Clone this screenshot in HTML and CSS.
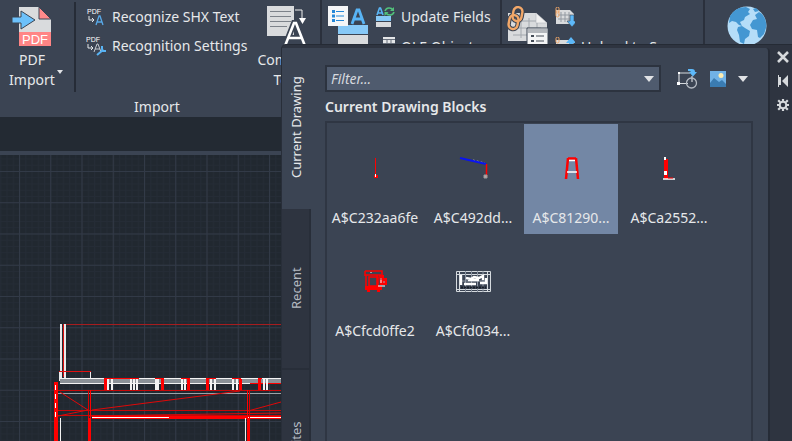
FILE: index.html
```html
<!DOCTYPE html>
<html lang="en">
<head>
    <meta charset="UTF-8">
    <meta name="viewport" content="width=device-width, initial-scale=1.0">
    <title>Blocks Palette</title>
    <link rel="stylesheet" href="styles.css">
</head>
<body>
    <header class="ribbon">
        <section class="panel panel-import">
            <div class="panel-tools">
                <button type="button" class="big-tool pdf-tool">
                    <svg width="42" height="42" viewBox="0 0 42 42">
                        <path d="M8 1h20l12 12v27H8z" fill="#d9dbdd"/>
                        <path d="M28 1l12 12H28z" fill="#ff8a8a" stroke="#3b4453"/>
                        <path d="M8 26h32v14H8z" fill="#ff8585"/>
                        <path d="M1 11h9V5l14 9-14 9v-6H1z" fill="#6cc1fb" stroke="#3b4453"/>
                        <text x="24" y="38" class="pdf-mark">PDF</text>
                    </svg>
                    <span>PDF<br>Import</span>
                    <svg class="drop" width="6" height="4"><path d="M0 0h6L3 4z"/></svg>
                </button>
                <div class="rule"></div>
                <div class="small-tools">
                    <button type="button" class="tool">
                        <svg width="20" height="20" viewBox="0 0 20 20">
                            <text x="1" y="7" class="tiny-mark">PDF</text>
                            <path d="M3 9v4h5M6 11l2 2-2 2" fill="none" stroke="#e4e7ea"/>
                            <path d="M10 18l3-9h1l3 9M11 15h5" fill="none" stroke="#58a9e8" stroke-width="1.3"/>
                        </svg>
                        Recognize SHX Text
                    </button>
                    <button type="button" class="tool">
                        <svg width="20" height="20" viewBox="0 0 20 20">
                            <text x="0" y="6" class="tiny-mark">PDF</text>
                            <path d="M2 8v4h5M5 10l2 2-2 2" fill="none" stroke="#e4e7ea"/>
                            <path d="M8 16l3-8h1l3 8M9 13h5" fill="none" stroke="#c6cbd1"/>
                            <path d="M11 19l6-5" stroke="#58b4f5" stroke-width="2"/>
                            <path d="M16 10v3l1 2h3" fill="none" stroke="#58b4f5" stroke-width="2"/>
                        </svg>
                        Recognition Settings
                    </button>
                </div>
                <button type="button" class="big-tool combine-tool">
                    <svg width="42" height="42" viewBox="0 0 42 42">
                        <path d="M1 0h27v30H1z" fill="#d9dbdd"/>
                        <path d="M4 5.500h21M4 10.500h21M4 15.500h21M4 20.500h17" stroke="#7c828a"/>
                        <path d="M29 4h7v9" fill="none" stroke="#f1f1f1"/>
                        <path d="M33 12h7l-3.500 6z" fill="#fff"/>
                        <path d="M19 40l9-23h2l9 23M22.500 32h13" fill="none" stroke="#3b4453" stroke-width="6"/>
                        <path d="M19 40l9-23h2l9 23M22.500 32h13" fill="none" stroke="#fff" stroke-width="2.600"/>
                    </svg>
                    <span>Combine<br>Text</span>
                </button>
            </div>
            <h2>Import</h2>
        </section>

        <section class="panel panel-data">
            <button type="button" class="big-tool" aria-label="Field">
                <svg width="42" height="42" viewBox="0 0 42 42">
                    <path d="M11 19h30v9H11z" fill="#87c9f7"/>
                    <path d="M11 29h30v12H11z" fill="#d9dbdd"/>
                    <path d="M1 0h20v20H1z" fill="#f5f6f7"/>
                    <path d="M5 5.500h3M5 10h3M5 14.500h3" stroke="#2387d8" stroke-width="3"/>
                    <path d="M9 5.500h8M9 10h8M9 14.500h8" stroke="#2387d8" stroke-width="1.200"/>
                    <path d="M25 18l5-14h2l5 14M27 13h8" fill="none" stroke="#58b4f5" stroke-width="2.800"/>
                </svg>
            </button>
            <div class="small-tools">
                <button type="button" class="tool">
                    <svg width="20" height="20" viewBox="0 0 20 20">
                        <path d="M1 9h15v5H1z" fill="#87c9f7"/>
                        <path d="M1 15h15v5H1z" fill="#d9dbdd"/>
                        <path d="M2 8l2.500-7h1L8 8M3 6h4" fill="none" stroke="#58b4f5" stroke-width="1.600"/>
                        <path d="M10 4a4.500 4.500 0 0 1 8-1M19 5a4.500 4.500 0 0 1-8 1" fill="none" stroke="#52c17b" stroke-width="1.600"/>
                        <path d="M19 0v4h-4zM9.500 9V5h4z" fill="#52c17b"/>
                    </svg>
                    Update Fields
                </button>
                <button type="button" class="tool">
                    <svg width="20" height="20" viewBox="0 0 20 20">
                        <path d="M8 0h13v14H8z" fill="#e4e6e8"/>
                        <path d="M8 2.500h12M8 6.500h12M12 3v11M16 3v11" stroke="#69717d"/>
                    </svg>
                    OLE Objects
                </button>
            </div>
        </section>

        <section class="panel panel-link">
            <button type="button" class="big-tool" aria-label="Data Link">
                <svg width="42" height="42" viewBox="0 0 42 42">
                    <path d="M1 7h28l11 10v18H1z" fill="#d9dbdd"/>
                    <path d="M29 7l11 10H29z" fill="#f1f1f1" stroke="#b7bbc0" stroke-width=".6"/>
                    <path d="M6 15h23M6 22h28M6 29h28M14 12v20M22 12v20M30 17v15" stroke="#a3a8ae" fill="none"/>
                    <path d="M20 22h21v18H20z" fill="#f4f5f6" stroke="#3b4453"/>
                    <path d="M21 23h19v4H21z" fill="#b4b8bd"/>
                    <path d="M24 30h3M24 35h3" stroke="#444c57" stroke-width="2"/>
                    <path d="M29 30h8M29 35h8" stroke="#444c57"/>
                    <g fill="none" stroke="#3b4453" stroke-width="4.500">
                        <rect x="6" y="1" width="9" height="14" rx="4.500" transform="rotate(10 10 8)"/>
                        <rect x="2" y="9" width="9" height="14" rx="4.500" transform="rotate(10 6 16)"/>
                    </g>
                    <g fill="none" stroke="#f3a869" stroke-width="2.400">
                        <rect x="6" y="1" width="9" height="14" rx="4.500" transform="rotate(10 10 8)"/>
                        <rect x="2" y="9" width="9" height="14" rx="4.500" transform="rotate(10 6 16)"/>
                    </g>
                </svg>
            </button>
            <div class="small-tools">
                <button type="button" class="tool" aria-label="Download from Source">
                    <svg width="20" height="20" viewBox="0 0 20 20">
                        <path d="M1 3h14l4 4v10H1z" fill="#d9dbdd"/>
                        <path d="M3 8h12M3 12h13M6 5v10M10 5v10M14 5v10" stroke="#9299a1"/>
                        <path d="M15 8h4v6h3l-5 6-5-6h3z" fill="#5db8f8" stroke="#3b4453" stroke-width=".6"/>
                        <rect x="1" y="0" width="3" height="6" rx="1.500" fill="none" stroke="#f3a869"/>
                        <rect x="1" y="4" width="3" height="6" rx="1.500" fill="none" stroke="#f3a869"/>
                    </svg>
                </button>
                <button type="button" class="tool">
                    <svg width="20" height="20" viewBox="0 0 20 20">
                        <path d="M1 3h14l4 4v9H1z" fill="#d9dbdd"/>
                        <path d="M16 0l5 6h-3v8h-4V6h-3z" fill="#5db8f8"/>
                        <rect x="1" y="0" width="3" height="6" rx="1.500" fill="none" stroke="#f3a869"/>
                    </svg>
                    Upload to Source
                </button>
            </div>
        </section>

        <section class="panel panel-location">
            <button type="button" class="big-tool" aria-label="Set Location">
                <svg width="42" height="42" viewBox="0 0 42 42">
                    <circle cx="21" cy="20" r="19.500" fill="#b5ddf8"/>
                    <g fill="#4497d2">
                        <path d="M4 10C8 4 13 1 20 1l4 2-2 3 2 2-5 3-1 3-4 2 2 4-3-1-3-3-4-1-3 2z"/>
                        <path d="M12 21l4-1 3 2 5 3-1 5-4 3-1 5-4-2-1-7-2-5z"/>
                        <path d="M29 9l4-3 3 2c3 4 5 8 4 14l-2 6-4 4-2-1-1-7-5-1-2-4 3-5 4-1z"/>
                        <path d="M27 3l3-1 3 3-4 1z"/>
                    </g>
                </svg>
            </button>
        </section>
    </header>

    <div class="file-tabs"></div>

    <main class="canvas">
        <svg class="drawing">
            <defs>
                <pattern id="minor" width="6.250" height="6.250" patternUnits="userSpaceOnUse" x="19" y="16">
                    <path d="M0 .5h7M.5 0v7" stroke="#252c36" fill="none"/>
                </pattern>
                <pattern id="major" width="31.250" height="31.250" patternUnits="userSpaceOnUse" x="19" y="16">
                    <path d="M0 .5h32M.5 0v32" stroke="#323a47" fill="none"/>
                </pattern>
            </defs>
            <rect width="100%" height="100%" fill="url(#minor)"/>
            <rect width="100%" height="100%" fill="url(#major)"/>
            <g transform="translate(0 -155)" fill="none" shape-rendering="crispEdges">
                <!-- roof line and post -->
                <path d="M66 324h215" stroke="#a61c1f"/>
                <path d="M61 324v56M65 324v56" stroke="#e8eaec" stroke-width="2"/>
                <path d="M63.500 324v53" stroke="#e01010"/>
                <path d="M59 371.500h32" stroke="#e01010"/>
                <path d="M90.500 372v6M59.500 372v9" stroke="#e8eaec"/>
                <!-- deck -->
                <path d="M60 381h221" stroke="#8b9197" stroke-width="5"/>
                <path d="M60 378.500h221M60 383.500h221" stroke="#f3f3f3"/>
                <path d="M104 378.500h35M155 378.500h9M181 378.500h9M206 378.500h10M232 378.500h9M258 378.500h4M250 383.500h31" stroke="#f00"/>
                <path d="M108 379v11M112 379v11M131 379v11M134 379v11M137 379v11M156 379v11M158 379v11M182 379v11M185 379v11M211 379v11M215 379v11M233 379v11M237 379v11M264 379v11M267 379v11" stroke="#f3f3f3" stroke-width="2"/>
                <path d="M105 379v11M162 379v11M188 379v11M207 379v11M240 379v11M259 379v11" stroke="#f00" stroke-width="3"/>
                <!-- truss -->
                <path d="M58 390.500h223M58 410.500h223M58 415.500h223" stroke="#c80808"/>
                <path d="M58 393.500h223" stroke="#9da3a8"/>
                <path d="M92 417.500h189" stroke="#f00" stroke-width="3"/>
                <path d="M92 417.500h77M248 417.500h33" stroke="#fff"/>
                <path d="M60 392l28 18M58 416l30-6M92 410l148-19M248 411l33-9M88 416l193-3" stroke="#e00808" shape-rendering="auto"/>
                <path d="M88.500 390v51M249.500 390v51" stroke="#d00"/>
                <path d="M90.500 390v51M247.500 390v51" stroke="#f00"/>
                <path d="M89 418v23M248 418v23" stroke="#f00" stroke-width="3"/>
                <path d="M56 382v59" stroke="#f00" stroke-width="4"/>
                <path d="M55.500 385v33" stroke="#fff" stroke-dasharray="5 4"/>
                <path d="M60.500 418v23M245.500 418v23" stroke="#f3f3f3"/>
            </g>
        </svg>
    </main>

    <aside class="palette">
        <nav class="palette-tabs">
            <button type="button" class="active">Current Drawing</button>
            <button type="button">Recent</button>
            <button type="button">Favorites</button>
        </nav>

        <div class="palette-body">
            <div class="filter-row">
                <div class="filter">
                    <input type="text" placeholder="Filter..." aria-label="Filter">
                    <button type="button" aria-label="Filter history">
                        <svg class="arrow" width="10" height="6"><path d="M0 0h10L5 6z"/></svg>
                    </button>
                </div>
                <button type="button" class="icon-button" aria-label="Insert block">
                    <svg width="22" height="22" viewBox="0 0 22 22">
                        <path d="M3 5v10M3 5h11M3 15.500h9M16 8v6" fill="none" stroke="#d5d9dd" stroke-width="1.200"/>
                        <path d="M2 4h2v2H2zM1 14h3v3H1z" fill="#fff"/>
                        <circle cx="15.500" cy="15" r="5" fill="none" stroke="#b4bac2" stroke-width="1.300"/>
                        <path d="M12 1h4q3 0 3 3h2l-4 4.500L13 4h2q0-1-3-1z" fill="#5db8f8"/>
                    </svg>
                </button>
                <button type="button" class="icon-button view-button" aria-label="View options">
                    <svg width="16" height="16" viewBox="0 0 16 16">
                        <path d="M0 0h16v16H0z" fill="#71b2e6"/>
                        <circle cx="11" cy="4.500" r="2.500" fill="#ffedb0"/>
                        <path d="M0 12l4-5 5 4 3-2 4 4v3H0z" fill="#3a7cb2"/>
                    </svg>
                    <svg class="arrow" width="10" height="6"><path d="M0 0h10L5 6z"/></svg>
                </button>
            </div>

            <h1>Current Drawing Blocks</h1>

            <div class="blocks">
                <button type="button" class="block">
                    <svg width="40" height="26" viewBox="0 0 40 26">
                        <path d="M20.500 3v20" stroke="#f00"/>
                        <path d="M19 20h4v3h-4z" fill="#f00"/>
                        <path d="M20.500 19v3" stroke="#fff"/>
                    </svg>
                    <span>A$C232aa6fe</span>
                </button>
                <button type="button" class="block">
                    <svg width="40" height="26" viewBox="0 0 40 26">
                        <path d="M20 5l12 3" stroke="#aab0b8" stroke-dasharray="2 2"/>
                        <path d="M7 3l26 6" stroke="#0a14f0" stroke-width="2"/>
                        <path d="M33.500 9v13" stroke="#f00" stroke-width="1.500"/>
                        <path d="M31 20h3v3h-3z" fill="#b9a3a6" stroke="#999"/>
                    </svg>
                    <span>A$C492dd...</span>
                </button>
                <button type="button" class="block selected">
                    <svg width="40" height="26" viewBox="0 0 40 26">
                        <path d="M17 3.500h8M17 3l-2 21M25 3l2 21" stroke="#f00" stroke-width="2.500" fill="none"/>
                        <path d="M18 5.500h6M16 17h10" stroke="#fff" stroke-width="1.500"/>
                    </svg>
                    <span>A$C81290...</span>
                </button>
                <button type="button" class="block">
                    <svg width="40" height="26" viewBox="0 0 40 26">
                        <path d="M15 4h4v20h-4z" fill="#f00"/>
                        <path d="M15 2h2v3h-2zM15 16h3v4h-3z" fill="#fff"/>
                        <path d="M14 24h12" stroke="#fff" stroke-width="1.500"/>
                        <path d="M19 23h5" stroke="#f00"/>
                    </svg>
                    <span>A$Ca2552...</span>
                </button>
                <button type="button" class="block">
                    <svg width="40" height="26" viewBox="0 0 40 26">
                        <path d="M10 3h17v3M10 3v5M10 7h18M11 7v14M14 9h9v9h-9zM22 7v11" stroke="#f00" stroke-width="1.500" fill="none"/>
                        <path d="M10 18h17v4h-2v2h-3v-2h-7v2h-3v-2h-2zM24 7h5v3h3v7h-7z" fill="#f00"/>
                        <path d="M23 18h7M26 12v3M16 4v1" stroke="#fff"/>
                        <path d="M25 11h2M28 14h2" stroke="#9da6b3"/>
                    </svg>
                    <span>A$Cfcd0ffe2</span>
                </button>
                <button type="button" class="block">
                    <svg width="40" height="26" viewBox="0 0 40 26">
                        <path d="M3.500 3.500h34v20h-34zM6.500 3v21M34.500 3v21M4 6.500h34M4 21.500h34" stroke="#d5dade" fill="none"/>
                        <path d="M12.500 3v21M18.500 3v21M24.500 3v21M30 3v21M7 13h27" stroke="#8e97a4"/>
                        <path d="M8 7v10M11 16h12M27 15h6v-5M13 10l5 1 3-2 5 1 4-2v4M15 12h11" stroke="#fff" stroke-width="2.400" fill="none"/>
                        <path d="M8 19.500h25" stroke="#171d27" stroke-width="2" stroke-dasharray="2 1"/>
                    </svg>
                    <span>A$Cfd034...</span>
                </button>
            </div>
        </div>

        <div class="palette-rail">
            <button type="button" aria-label="Close">
                <svg width="12" height="12" viewBox="0 0 12 12"><path d="M1 1l10 10M11 1L1 11" stroke="#d6d9dc" stroke-width="2.600"/></svg>
            </button>
            <button type="button" aria-label="Auto-hide">
                <svg width="12" height="12" viewBox="0 0 12 12"><path d="M1 0h1v12H1zM2 2h2v8H2zM11 0v12L5 6z" fill="#d6d9dc"/></svg>
            </button>
            <button type="button" aria-label="Properties">
                <svg width="12" height="12" viewBox="0 0 12 12">
                    <circle cx="6" cy="6" r="3.300" fill="none" stroke="#d6d9dc" stroke-width="2"/>
                    <path d="M6 0v2M6 10v2M0 6h2M10 6h2M1.200 1.200l2 2M8.800 8.800l2 2M10.800 1.200l-2 2M1.200 10.800l2-2" stroke="#d6d9dc" stroke-width="2.200"/>
                </svg>
            </button>
        </div>
    </aside>
</body>
</html>
```
FILE: styles.css
```css
* {
    box-sizing: border-box;
}

body {
    margin: 0;
    height: 100vh;
    display: flex;
    flex-direction: column;
    position: relative;
    overflow: hidden;
    background-color: #212830;
    color: #e6e8ea;
    font-family: "Noto Sans", "Open Sans", sans-serif;
    font-size: 14px;
    line-height: 20px;
}

button {
    margin: 0;
    padding: 0;
    border: none;
    background: none;
    color: inherit;
    font: inherit;
    cursor: pointer;
}

svg {
    display: block;
    flex-shrink: 0;
}

h1, h2 {
    margin: 0;
    font-size: 14px;
    line-height: 20px;
}

/* ribbon */
.ribbon {
    display: flex;
    height: 117px;
    flex-shrink: 0;
    background-color: #3b4453;
}

.panel {
    display: flex;
    flex-shrink: 0;
    padding-top: 6px;
    border-right: 2px solid #2a303c;
}

.panel-import {
    flex-direction: column;
    justify-content: space-between;
    width: 322px;
}

.panel-import h2 {
    font-weight: normal;
    text-align: center;
    padding-right: 6px;
}

.panel-tools {
    display: flex;
}

.panel-data {
    width: 180px;
    padding-left: 5px;
}

.panel-link {
    width: 203px;
    padding-left: 5px;
}

.panel-location {
    flex: 1;
    justify-content: center;
    padding-right: 4px;
    border-right: none;
}

.big-tool {
    display: flex;
    flex-direction: column;
    align-items: center;
    align-self: flex-start;
    gap: 2px;
    text-align: center;
}

.pdf-tool {
    position: relative;
    width: 74px;
    padding-right: 10px;
}

.pdf-tool .drop {
    position: absolute;
    right: 11px;
    bottom: 16px;
}

.combine-tool {
    margin-left: auto;
    width: 66px;
}

.rule {
    width: 2px;
    height: 90px;
    margin: -4px 10px 0 0;
    background-color: #262c37;
}

.small-tools {
    display: flex;
    flex-direction: column;
    align-items: flex-start;
    gap: 9px;
    padding-top: 1px;
}

.tool {
    display: flex;
    align-items: center;
    gap: 6px;
    white-space: nowrap;
}

.panel-data .small-tools,
.panel-link .small-tools {
    gap: 10px;
    padding-left: 6px;
}

.pdf-mark {
    font-family: "Liberation Sans", sans-serif;
    font-size: 13px;
    text-anchor: middle;
    fill: #fff;
}

.tiny-mark {
    font-family: "Liberation Sans", sans-serif;
    font-size: 7px;
    fill: #fff;
}

.drop, .arrow {
    fill: #e1e3e6;
}

/* drawing area */
.file-tabs {
    height: 38px;
    flex-shrink: 0;
    background-color: #232a33;
    border-bottom: 4px solid #3b4453;
}

.canvas {
    flex: 1;
    min-height: 0;
}

.drawing {
    width: 100%;
    height: 100%;
}

/* blocks palette floats over the drawing */
.palette {
    position: absolute;
    top: 44px;
    left: 281px;
    right: 0;
    bottom: 0;
    display: flex;
    padding-top: 3px;
    background-color: #2e3440;
    border-left: 1px solid #282e39;
    border-top: 1px solid #252b35;
    border-top-left-radius: 5px;
    overflow: hidden;
}

.palette-tabs {
    display: flex;
    flex-direction: column;
    width: 29px;
    flex-shrink: 0;
}

.palette-tabs button {
    height: 161px;
    flex-shrink: 0;
    writing-mode: vertical-rl;
    transform: rotate(180deg);
    color: #b5bac2;
    font-size: 13px;
    border-left: 2px solid #282e39;
    border-top: 2px solid #282e39;
}

.palette-tabs .active {
    background-color: #3b4453;
    border-color: #3b4453;
    color: #e6e8ea;
}

.palette-body {
    flex: 1;
    min-width: 0;
    display: flex;
    flex-direction: column;
    padding: 17px 15px 0 14px;
    background-color: #3b4453;
    border-right: 2px solid #262c37;
    border-top-right-radius: 4px;
}

.filter-row {
    display: flex;
    align-items: center;
}

.filter {
    flex: 1;
    display: flex;
    height: 27px;
    background-color: #4f5b6e;
    border: 2px solid #2c333f;
}

.filter input {
    flex: 1;
    min-width: 0;
    padding: 0 4px;
    border: none;
    outline: none;
    background: none;
    color: #e6e8ea;
    font: inherit;
}

.filter input::placeholder {
    color: #d5d9de;
    font-style: italic;
}

.filter button {
    padding: 0 5px;
}

.icon-button {
    margin-left: 15px;
}

.view-button {
    display: flex;
    align-items: center;
    gap: 12px;
    margin-left: 12px;
    margin-right: 5px;
}

.palette-body h1 {
    margin: 5px 0 4px;
    font-weight: 600;
}

.blocks {
    flex: 1;
    min-height: 0;
    display: flex;
    flex-wrap: wrap;
    align-content: flex-start;
    gap: 3px 4px;
    padding: 1px;
    border: 2px solid #2f3643;
    border-bottom: none;
}

.block {
    display: flex;
    flex-direction: column;
    align-items: center;
    gap: 27px;
    width: 94px;
    height: 110px;
    padding-top: 31px;
}

.block.selected {
    background-color: #7387a5;
}

.palette-rail {
    display: flex;
    flex-direction: column;
    gap: 12px;
    width: 22px;
    padding: 3px 0 0 7px;
    flex-shrink: 0;
}
```
